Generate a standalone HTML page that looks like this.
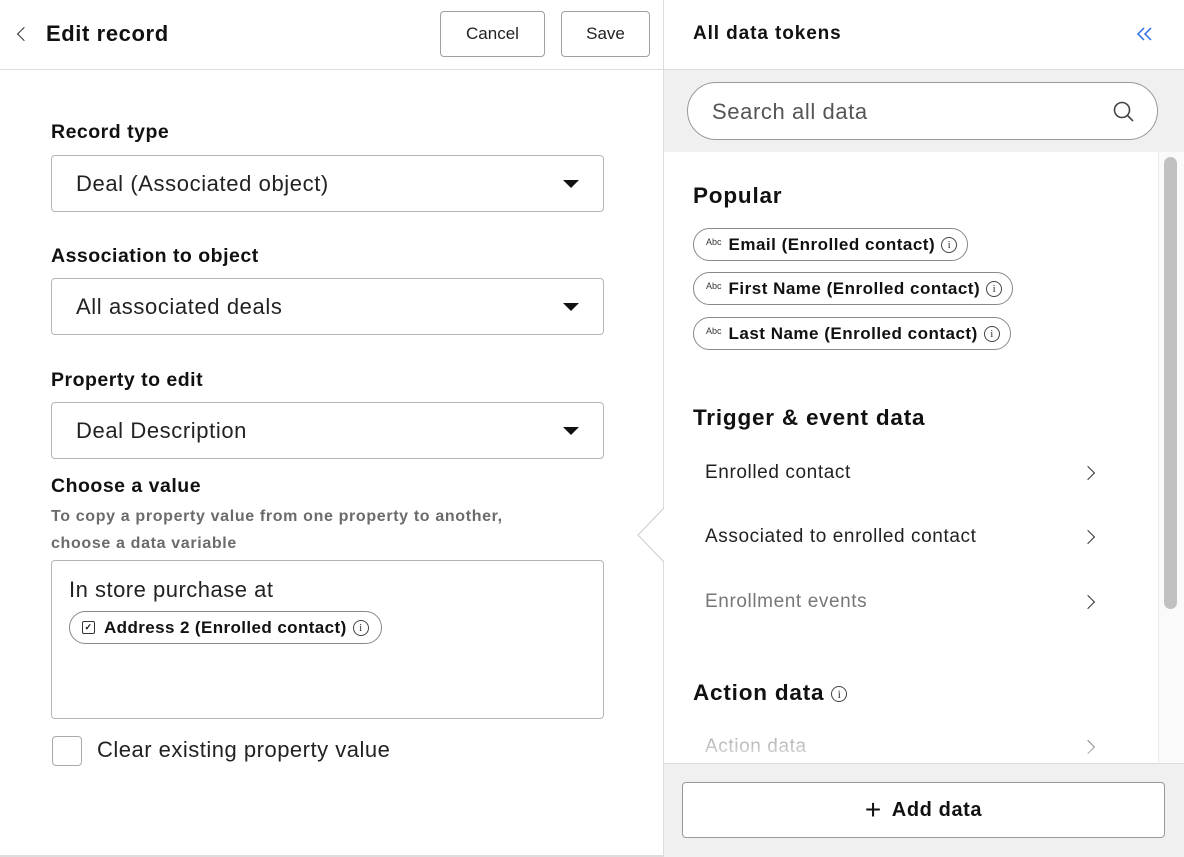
<!DOCTYPE html>
<html><head><meta charset="utf-8"><style>
*{box-sizing:border-box;margin:0;padding:0}
body{width:1184px;height:857px;overflow:hidden;background:#fff;font-family:"Liberation Sans",sans-serif;color:#1f1f1f;position:relative}
.a{position:absolute}
.btn{position:absolute;border:1px solid #a0a0a0;border-radius:4px;background:#fff;font-size:17px;display:flex;align-items:center;justify-content:center;color:#222}
.lbl{position:absolute;left:51px;font-size:19.5px;font-weight:bold;color:#111;letter-spacing:.5px}
.sel{position:absolute;left:51px;width:553px;height:57px;border:1px solid #b5b5b5;border-radius:4px;font-size:22px;padding-left:24px;display:flex;align-items:center;color:#222;letter-spacing:.6px}
.sel:after{content:"";position:absolute;right:24px;top:24px;border-left:8px solid transparent;border-right:8px solid transparent;border-top:8px solid #111}
.chip{position:absolute;left:693px;height:33px;border:1px solid #888;border-radius:17px;display:flex;align-items:center;padding:0 10px 0 12px;font-size:17px;font-weight:bold;color:#111;white-space:nowrap;letter-spacing:.5px}
.chip small{font-size:9px;font-weight:normal;margin-right:7px;color:#333;position:relative;top:-3px;letter-spacing:0}
.i{display:inline-block;width:16px;height:16px;border:1px solid #444;border-radius:50%;font-size:11px;font-weight:normal;text-align:center;line-height:14px;margin-left:6px;font-family:"Liberation Serif",serif;color:#333;letter-spacing:0}
.row{position:absolute;left:705px;width:400px;font-size:19px;color:#222;letter-spacing:.6px}
.row:after{content:"";position:absolute;right:12px;top:6px;width:9px;height:9px;border-top:1.5px solid #333;border-right:1.5px solid #333;transform:rotate(45deg)}
.h{position:absolute;left:693px;font-size:22.5px;font-weight:bold;color:#111;letter-spacing:.8px}
</style></head><body>
<div class="a" style="left:19px;top:29px;width:10px;height:10px;border-left:1.6px solid #333;border-bottom:1.6px solid #333;transform:rotate(45deg)"></div>
<div class="a" style="left:46px;top:21px;font-size:22px;font-weight:bold;color:#111;letter-spacing:.6px">Edit record</div>
<div class="btn" style="left:440px;top:11px;width:105px;height:46px">Cancel</div>
<div class="btn" style="left:561px;top:11px;width:89px;height:46px">Save</div>
<div class="a" style="left:0;top:69px;width:663px;height:1px;background:#ddd"></div>
<div class="a" style="left:663px;top:0;width:1px;height:857px;background:#ddd"></div>
<div class="a" style="left:0;top:855px;width:663px;height:2px;background:#ddd"></div>

<div class="lbl" style="top:121px">Record type</div>
<div class="sel" style="top:155px">Deal (Associated object)</div>
<div class="lbl" style="top:245px">Association to object</div>
<div class="sel" style="top:278px">All associated deals</div>
<div class="lbl" style="top:369px">Property to edit</div>
<div class="sel" style="top:402px">Deal Description</div>
<div class="lbl" style="top:475px">Choose a value</div>
<div class="a" style="left:51px;top:503px;font-size:16px;font-weight:bold;color:#6b6b6b;line-height:27px;letter-spacing:.65px">To copy a property value from one property to another,<br>choose a data variable</div>
<div class="a" style="left:51px;top:560px;width:553px;height:159px;border:1px solid #b5b5b5;border-radius:4px"></div>
<div class="a" style="left:69px;top:577px;font-size:22px;color:#222;letter-spacing:.5px">In store purchase at</div>
<div class="a" style="left:69px;top:611px;height:33px;border:1px solid #888;border-radius:17px;display:flex;align-items:center;padding:0 12px;font-size:17px;font-weight:bold;color:#111;white-space:nowrap;letter-spacing:.4px"><span style="display:inline-block;width:13px;height:13px;border:1.5px solid #333;border-radius:2px;margin-right:9px;font-size:9px;line-height:10px;text-align:center">✓</span>Address 2 (Enrolled contact)<span class="i">i</span></div>
<div class="a" style="left:52px;top:736px;width:30px;height:30px;border:1px solid #aaa;border-radius:4px"></div>
<div class="a" style="left:97px;top:737px;font-size:22px;color:#222;letter-spacing:.5px">Clear existing property value</div>

<svg class="a" style="left:636px;top:508px" width="30" height="54"><polygon points="28,0 2,27 28,54 30,54 30,0" fill="#fff"/><polyline points="28,0 2,27 28,54" fill="none" stroke="#ccc"/></svg>

<div class="a" style="left:693px;top:23px;font-size:19px;font-weight:bold;color:#111;letter-spacing:.9px">All data tokens</div>
<svg class="a" style="left:1136px;top:25px" width="18" height="18"><polyline points="8,3 2,9 8,15" fill="none" stroke="#2a6ee0" stroke-width="1.5"/><polyline points="15,3 9,9 15,15" fill="none" stroke="#2a6ee0" stroke-width="1.5"/></svg>
<div class="a" style="left:664px;top:69px;width:520px;height:83px;background:#f0f0f0;border-top:1px solid #ddd"></div>
<div class="a" style="left:687px;top:82px;width:471px;height:58px;border:1px solid #999;border-radius:29px;background:#fff;font-size:22px;color:#555;padding:16px 0 0 24px;letter-spacing:.6px">Search all data</div>
<svg class="a" style="left:1112px;top:100px" width="24" height="24"><circle cx="10" cy="10" r="7.5" fill="none" stroke="#444" stroke-width="1.6"/><line x1="15.5" y1="15.5" x2="21" y2="21" stroke="#444" stroke-width="1.6"/></svg>
<div class="a" style="left:1158px;top:152px;width:26px;height:612px;background:#fafafa;border-left:1px solid #eee"></div>
<div class="a" style="left:1164px;top:157px;width:13px;height:452px;background:#c1c1c1;border-radius:7px"></div>

<div class="h" style="top:183px">Popular</div>
<div class="chip" style="top:228px"><small>Abc</small>Email (Enrolled contact)<span class="i">i</span></div>
<div class="chip" style="top:272px"><small>Abc</small>First Name (Enrolled contact)<span class="i">i</span></div>
<div class="chip" style="top:317px"><small>Abc</small>Last Name (Enrolled contact)<span class="i">i</span></div>
<div class="h" style="top:405px">Trigger &amp; event data</div>
<div class="row" style="top:462px">Enrolled contact</div>
<div class="row" style="top:526px">Associated to enrolled contact</div>
<div class="row" style="top:591px;color:#777">Enrollment events</div>
<div class="h" style="top:680px">Action data<span class="i" style="font-size:12px;margin-left:7px;vertical-align:2px">i</span></div>
<div class="row" style="top:736px;color:#888">Action data</div>
<div class="a" style="left:664px;top:720px;width:494px;height:43px;background:linear-gradient(rgba(255,255,255,0),rgba(255,255,255,.8))"></div>
<div class="a" style="left:664px;top:763px;width:520px;height:94px;background:#f0f0f0;border-top:1px solid #ddd"></div>
<div class="a" style="left:682px;top:782px;width:483px;height:56px;border:1px solid #999;border-radius:4px;background:#fff;display:flex;align-items:center;justify-content:center;font-size:20px;font-weight:bold;color:#111;letter-spacing:.6px"><span style="font-weight:normal;font-size:28px;margin-right:10px;line-height:20px">+</span>Add data</div>
</body></html>
